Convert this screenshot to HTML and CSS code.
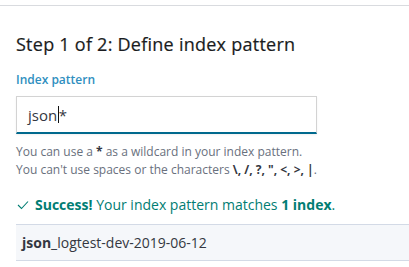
FILE: index.html
```html
<!DOCTYPE html>
<html>
<head>
<meta charset="utf-8">
<link rel="stylesheet" href="styles.css">
</head>
<body>
<div class="page">
  <div class="panel">
    <h2 class="title">Step 1 of 2: Define index pattern</h2>
    <label class="label">Index pattern</label>
    <div class="input"><span>json</span><span class="caret"></span><span>*</span></div>
    <div class="help">
      <div>You can use a <b>*</b> as a wildcard in your index pattern.</div>
      <div>You can't use spaces or the characters <b>\, /, ?, ", &lt;, &gt;, |</b>.</div>
    </div>
    <div class="success">
      <svg class="check" width="12" height="10" viewBox="0 0 12 10"><path d="M1 5 L4.5 8.5 L11 1.5" fill="none" stroke="#017d73" stroke-width="1.1"/></svg>
      <span><b>Success!</b> Your index pattern matches <b>1 index</b>.</span>
    </div>
    <div class="row"><b>json</b>_logtest-dev-2019-06-12</div>
  </div>
</div>
</body>
</html>
```
FILE: styles.css
```css
html, body { margin: 0; padding: 0; background: #fff; }
body { font-family: "Open Sans", "Noto Sans", sans-serif; color: #343741; overflow: hidden; }
.page { width: 409px; height: 267px; padding-top: 5px; box-sizing: border-box; }
.panel { border-top: 1px solid #d9dbdf; padding: 24px 0 0 16px; }
.title { margin: 0; font-size: 18px; font-weight: 400; line-height: 28px; color: #1a1c21; letter-spacing: 0.25px; -webkit-text-stroke: 0.2px #1a1c21; }
.label { display: block; margin-top: 14px; font-size: 12px; font-weight: 600; line-height: 16px; color: #2f8fc0; }
.input { margin-top: 8px; width: 301px; height: 38px; box-sizing: border-box; border: 1px solid #d3d3d3; border-bottom: 2px solid #00698d; padding: 0 11px; display: flex; align-items: center; font-size: 15px; color: #343741; box-shadow: 0 1px 2px rgba(0,0,0,0.06); }
.caret { display: inline-block; width: 1px; height: 17px; background: #111; margin: 0 0 0 0.5px; }
.help { margin-top: 9px; font-size: 12px; line-height: 17.5px; color: #69707d; }
.help b { color: #343741; }
.success { margin-top: 17px; display: flex; align-items: center; gap: 6px; font-size: 14px; line-height: 20px; color: #017d73; }
.success b { font-weight: 700; }
.check { margin-left: 1px; }
.row { margin-top: 9px; border-top: 1px solid #d3dae6; border-bottom: 1px solid #d3dae6; background: #f5f7fa; height: 37px; box-sizing: border-box; display: flex; align-items: center; padding-left: 6px; font-size: 14px; color: #343741; }
.row b { font-weight: 700; }
```
